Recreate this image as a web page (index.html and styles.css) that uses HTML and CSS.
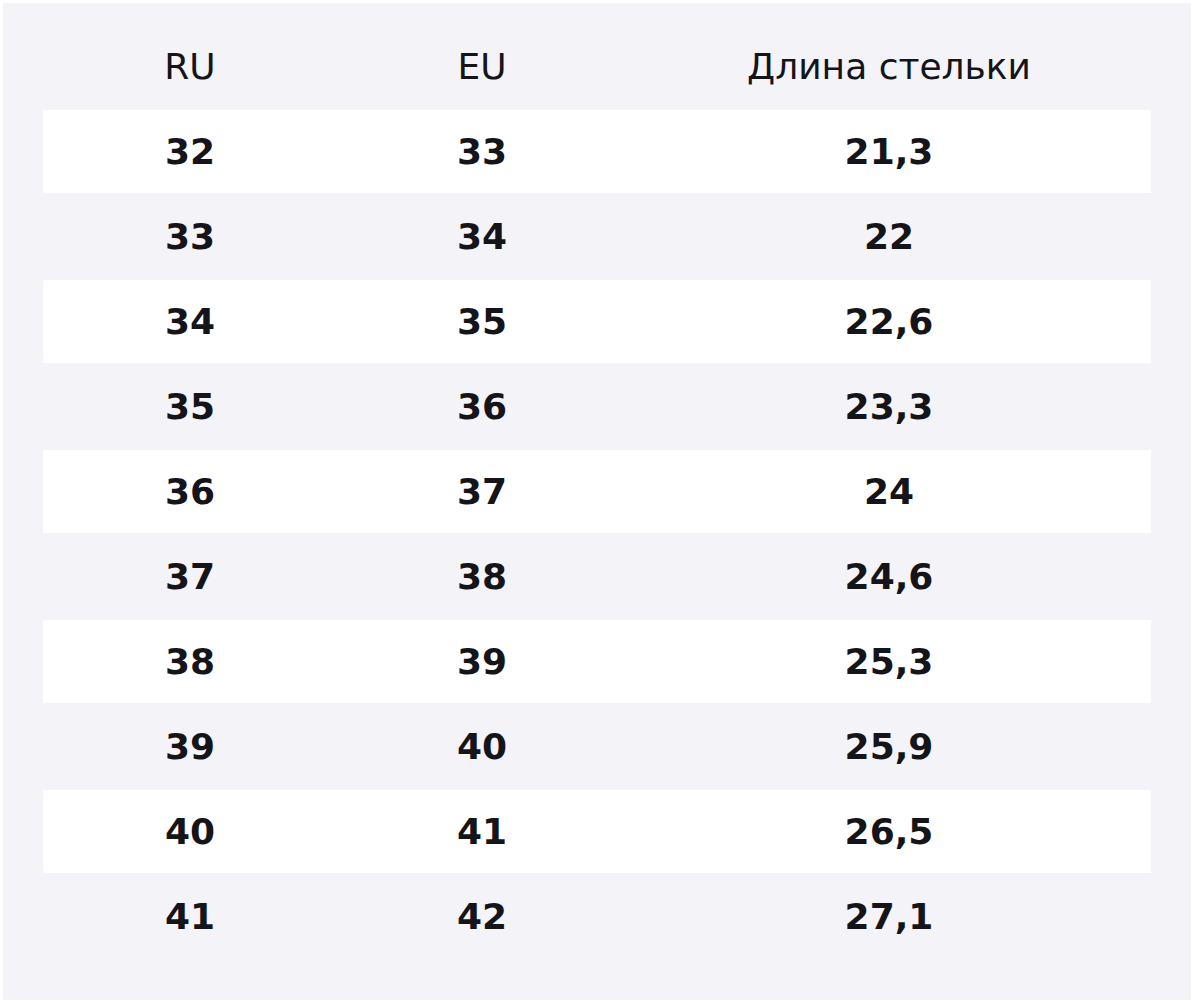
FILE: index.html
```html
<!DOCTYPE html>
<html lang="ru">
<head>
<meta charset="utf-8">
<title>Таблица размеров</title>
<link rel="stylesheet" href="styles.css">
</head>
<body>
<div class="sheet">
  <div class="row head">
    <div class="cell">RU</div>
    <div class="cell">EU</div>
    <div class="cell">Длина стельки</div>
  </div>
  <div class="row odd"><div class="cell">32</div><div class="cell">33</div><div class="cell">21,3</div></div>
  <div class="row even"><div class="cell">33</div><div class="cell">34</div><div class="cell">22</div></div>
  <div class="row odd"><div class="cell">34</div><div class="cell">35</div><div class="cell">22,6</div></div>
  <div class="row even"><div class="cell">35</div><div class="cell">36</div><div class="cell">23,3</div></div>
  <div class="row odd"><div class="cell">36</div><div class="cell">37</div><div class="cell">24</div></div>
  <div class="row even"><div class="cell">37</div><div class="cell">38</div><div class="cell">24,6</div></div>
  <div class="row odd"><div class="cell">38</div><div class="cell">39</div><div class="cell">25,3</div></div>
  <div class="row even"><div class="cell">39</div><div class="cell">40</div><div class="cell">25,9</div></div>
  <div class="row odd"><div class="cell">40</div><div class="cell">41</div><div class="cell">26,5</div></div>
  <div class="row even"><div class="cell">41</div><div class="cell">42</div><div class="cell">27,1</div></div>
</div>
</body>
</html>
```
FILE: styles.css
```css
html, body {
  margin: 0;
  background: #ffffff;
}
body {
  padding: 3px;
  font-family: "DejaVu Sans", "Liberation Sans", sans-serif;
  color: #141419;
}
.sheet {
  background: #f3f3f8;
  padding: 0 40px 40px;
  height: 957px;
}
.row {
  display: grid;
  grid-template-columns: 294px 290px 524px;
  align-items: center;
  font-size: 36px;
  line-height: 42px;
  font-weight: bold;
}
.cell {
  text-align: center;
}
.head {
  font-weight: normal;
  padding: 43px 0 22px;
}
.odd {
  background: #ffffff;
  height: 83px;
}
.even {
  height: 87px;
}
```
